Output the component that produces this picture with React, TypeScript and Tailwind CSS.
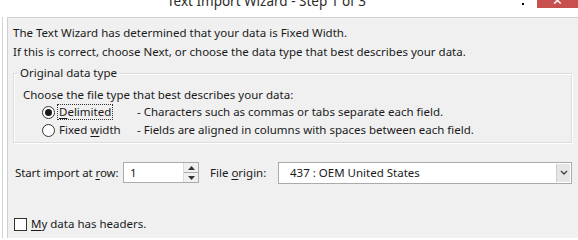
import React from 'react'

const font = { fontFamily: '"Noto Sans", "Open Sans", sans-serif' }

function Radio({ checked }: { checked?: boolean }) {
  return (
    <span className="w-[13px] h-[13px] rounded-full border border-[#333] bg-white flex items-center justify-center shrink-0">
      {checked && <span className="w-[7px] h-[7px] rounded-full bg-[#1a1a1a]" />}
    </span>
  )
}

export default function App() {
  return (
    <div
      className="w-[578px] h-[238px] bg-white overflow-hidden flex flex-col text-[11.5px] text-[#1a1a1a]"
      style={font}
    >
      {/* title bar, cut off at the top */}
      <div className="h-[17px] shrink-0 flex items-start relative">
        <div className="pl-[167px] -mt-[8px] text-[13.5px] leading-[18px] text-[#2b2b2b] whitespace-nowrap">
          Text Import Wizard - Step 1 of 3
        </div>
        <span className="absolute left-[522px] top-[3px] w-[2px] h-[2px] bg-black" />
        <div className="absolute right-0 top-0 w-[41px] h-[8px] bg-[#c7504f] flex justify-center overflow-hidden">
          <span className="text-white text-[13px] leading-[10px] -mt-[5px]">✕</span>
        </div>
      </div>

      <div className="flex-1 flex min-h-0">
        {/* window frame */}
        <div className="w-[7px] shrink-0 flex">
          <span className="ml-[2px] w-px bg-[#d4d4d4]" />
        </div>

        <div className="flex-1 bg-[#f0f0f0] border-t border-l border-[#d0d0d0] flex flex-col pl-[5px] pr-[5px]">
          <p className="mt-[7px] leading-[16px] whitespace-nowrap">
            The Text Wizard has determined that your data is Fixed Width.
          </p>
          <p className="mt-[3px] leading-[16px] whitespace-nowrap">
            If this is correct, choose Next, or choose the data type that best describes your data.
          </p>

          {/* group box */}
          <div className="mt-[13px] h-[70px] relative border border-[#dcdcdc] shadow-[inset_1px_1px_0_#ffffff,1px_1px_0_#ffffff] mr-[1px] flex flex-col pl-[9px]">
            <span className="absolute -top-[9px] left-[4px] px-[2px] bg-[#f0f0f0] leading-[16px] whitespace-nowrap">
              Original data type
            </span>
            <p className="mt-[13px] leading-[16px] whitespace-nowrap">
              Choose the file type that best describes your data:
            </p>
            <div className="flex items-center h-[18px] pl-[19px] whitespace-nowrap">
              <Radio checked />
              <span className="ml-[3px] w-[79px] shrink-0">
                <span className="outline outline-1 outline-dotted outline-[#333] px-[1px] leading-[14px] inline-block">
                  <span className="underline underline-offset-2">D</span>elimited
                </span>
              </span>
              <span>- Characters such as commas or tabs separate each field.</span>
            </div>
            <div className="flex items-center h-[18px] pl-[19px] whitespace-nowrap">
              <Radio />
              <span className="ml-[4px] w-[78px] shrink-0">
                Fixed <span className="underline underline-offset-2">w</span>idth
              </span>
              <span>- Fields are aligned in columns with spaces between each field.</span>
            </div>
          </div>

          {/* row / origin */}
          <div className="mt-[19px] flex items-center h-[21px] whitespace-nowrap">
            <span className="ml-[2px] w-[108px] shrink-0 tracking-[-0.1px]">
              Start import at <span className="underline underline-offset-2">r</span>ow:
            </span>
            <div className="w-[76px] h-[21px] bg-white border border-[#ababab] flex items-stretch">
              <span className="flex-1 pl-[6px] leading-[19px]">1</span>
              <div className="w-[15px] flex flex-col border-l border-[#dcdcdc] bg-[#f0f0f0]">
                <div className="flex-1 flex items-center justify-center border-b border-[#ababab]">
                  <svg width="7" height="4" viewBox="0 0 7 4"><path d="M3.5 0L7 4H0z" fill="#333" /></svg>
                </div>
                <div className="flex-1 flex items-center justify-center">
                  <svg width="7" height="4" viewBox="0 0 7 4"><path d="M0 0h7L3.5 4z" fill="#333" /></svg>
                </div>
              </div>
            </div>
            <span className="ml-[11px] w-[68px] shrink-0">
              File <span className="underline underline-offset-2">o</span>rigin:
            </span>
            <div className="flex-1 mr-[1px] h-[22px] bg-white border border-[#ababab] flex items-stretch">
              <span className="flex-1 pl-[11px] leading-[20px]">437 : OEM United States</span>
              <div className="w-[14px] bg-[#e6e6e6] border-l border-[#cfcfcf] flex items-center justify-center m-[1px]">
                <svg width="8" height="5" viewBox="0 0 8 5">
                  <path d="M1 1l3 3 3-3" stroke="#444" strokeWidth="1.4" fill="none" />
                </svg>
              </div>
            </div>
          </div>

          {/* checkbox */}
          <div className="mt-[34px] flex items-center h-[14px] whitespace-nowrap">
            <span className="ml-[1px] w-[13px] h-[13px] border border-[#333] bg-white shrink-0" />
            <span className="ml-[4px]">
              <span className="underline underline-offset-2">M</span>y data has headers.
            </span>
          </div>
        </div>
      </div>
    </div>
  )
}
